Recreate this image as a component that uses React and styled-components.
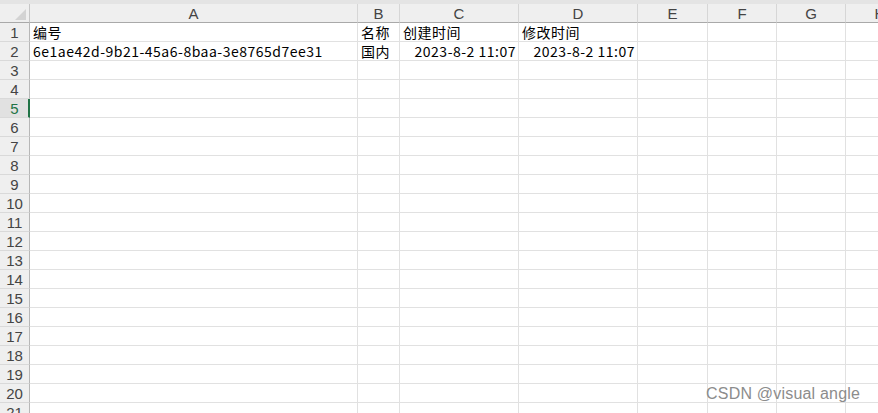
import React from "react";
import styled, { createGlobalStyle, css } from "styled-components";

const Global = createGlobalStyle`
  html, body { margin: 0; padding: 0; background: #ffffff; }
  body { font-family: "Noto Sans CJK SC", "Noto Sans", sans-serif; overflow: hidden; }
`;

const COLS = [
  { key: "A", w: 328 },
  { key: "B", w: 42 },
  { key: "C", w: 119 },
  { key: "D", w: 119 },
  { key: "E", w: 70 },
  { key: "F", w: 69 },
  { key: "G", w: 69 },
  { key: "H", w: 69 },
];

const DATA = {
  1: { A: "编号", B: "名称", C: "创建时间", D: "修改时间" },
  2: { A: "6e1ae42d-9b21-45a6-8baa-3e8765d7ee31", B: "国内", C: { v: "2023-8-2 11:07", right: true }, D: { v: "2023-8-2 11:07", right: true } },
};

const Page = styled.div`
  position: relative;
  width: 878px;
  height: 413px;
  overflow: hidden;
  background: #ffffff;
`;

const TopStrip = styled.div`
  height: 4px;
  background: #e4e4e4;
`;

const Grid = styled.div`
  display: grid;
  grid-template-columns: 30px ${COLS.map((c) => c.w + "px").join(" ")};
  grid-auto-rows: 19px;
`;

const Corner = styled.div`
  position: relative;
  background: #efefef;
  border-right: 1px solid #c6c6c6;
  border-bottom: 1px solid #a9a9a9;
  box-sizing: border-box;
  svg { position: absolute; right: 3px; bottom: 2px; }
`;

const ColHead = styled.div`
  box-sizing: border-box;
  background: #efefef;
  border-right: 1px solid #d6d6d6;
  border-bottom: 1px solid #a9a9a9;
  display: flex;
  align-items: center;
  justify-content: center;
  font-family: "Liberation Sans", Arial, sans-serif;
  font-size: 15px;
  color: #444444;
  line-height: 1;
`;

const RowHead = styled.div`
  box-sizing: border-box;
  background: ${(p) => (p.$active ? "#e1e1e1" : "#efefef")};
  border-bottom: 1px solid #d9d9d9;
  border-right: ${(p) => (p.$active ? "2px solid #217346" : "1px solid #b7b7b7")};
  display: flex;
  align-items: center;
  justify-content: center;
  font-family: "Liberation Sans", Arial, sans-serif;
  font-size: 15px;
  color: ${(p) => (p.$active ? "#217346" : "#444444")};
  line-height: 1;
  ${(p) => p.$active && css`padding-left: 1px;`}
`;

const Cell = styled.div`
  box-sizing: border-box;
  border-right: 1px solid #e1e1e1;
  border-bottom: 1px solid #e1e1e1;
  display: flex;
  align-items: center;
  justify-content: ${(p) => (p.$right ? "flex-end" : "flex-start")};
  padding: 0 ${(p) => (p.$right ? "2px" : "0")} 0 3px;
  font-family: "Noto Sans CJK SC", "Noto Sans", sans-serif;
  font-size: 14px;
  letter-spacing: 0.5px;
  color: #000000;
  white-space: nowrap;
  overflow: visible;
  line-height: 1;
`;

const Watermark = styled.div`
  position: absolute;
  left: 706px;
  top: 385px;
  font-family: "Liberation Sans", Arial, sans-serif;
  font-size: 16px;
  letter-spacing: 0.2px;
  color: #8c8c8c;
`;

export default function App() {
  const rows = Array.from({ length: 21 }, (_, i) => i + 1);
  return (
    <Page>
      <Global />
      <TopStrip />
      <Grid>
        <Corner>
          <svg width="11" height="11" viewBox="0 0 11 11">
            <polygon points="11,0 11,11 0,11" fill="#d3d3d3" />
          </svg>
        </Corner>
        {COLS.map((c) => (
          <ColHead key={c.key}>{c.key}</ColHead>
        ))}
        {rows.map((r) => (
          <React.Fragment key={r}>
            <RowHead $active={r === 5}>{r}</RowHead>
            {COLS.map((c) => {
              const d = DATA[r] && DATA[r][c.key];
              const isObj = d && typeof d === "object";
              return (
                <Cell key={c.key} $right={isObj && d.right}>
                  {isObj ? d.v : d || ""}
                </Cell>
              );
            })}
          </React.Fragment>
        ))}
      </Grid>
      <Watermark>CSDN @visual angle</Watermark>
    </Page>
  );
}
